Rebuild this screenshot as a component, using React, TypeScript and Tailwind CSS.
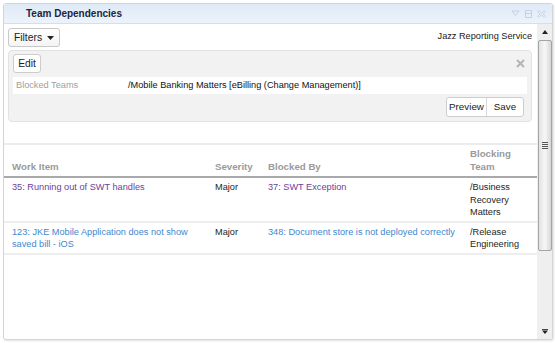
import React from "react";

function TitleIcons() {
  return (
    <svg width="36" height="10" viewBox="0 0 36 10" className="mr-[5px]">
      <polygon points="1,2 8,2 4.5,6.5" fill="none" stroke="#c4d2e2" strokeWidth="1" />
      <rect x="14.5" y="1.5" width="6" height="7" fill="none" stroke="#c4d2e2" strokeWidth="1" />
      <line x1="14.5" y1="4.5" x2="20.5" y2="4.5" stroke="#c4d2e2" strokeWidth="1" />
      <path d="M27.5 1.5 L30.5 4 L33.5 1.5 L34.5 2.5 L32 5 L34.5 7.5 L33.5 8.5 L30.5 6 L27.5 8.5 L26.5 7.5 L29 5 L26.5 2.5 Z" fill="none" stroke="#c4d2e2" strokeWidth="0.9" />
    </svg>
  );
}

function Scrollbar() {
  return (
    <div className="w-[15px] bg-[#efefef] flex flex-col items-center">
      <div className="h-[16px] w-full flex items-center justify-center">
        <svg width="6" height="4" viewBox="0 0 6 4">
          <polygon points="0,4 6,4 3,0" fill="#222" />
        </svg>
      </div>
      <div className="w-[14px] h-[211px] rounded-[2px] border border-[#a4a4a4] bg-gradient-to-r from-[#e2e2e2] via-[#f7f7f7] to-[#d6d6d6] flex items-center justify-center">
        <div className="flex flex-col gap-[1px]">
          <div className="w-[6px] h-[1px] bg-[#555]" />
          <div className="w-[6px] h-[1px] bg-[#555]" />
          <div className="w-[6px] h-[1px] bg-[#555]" />
          <div className="w-[6px] h-[1px] bg-[#555]" />
        </div>
      </div>
      <div className="flex-1" />
      <div className="h-[16px] w-full flex items-center justify-center">
        <svg width="6" height="5" viewBox="0 0 6 5">
          <rect x="0" y="0" width="6" height="1" fill="#444" />
          <polygon points="0,1.5 6,1.5 3,5" fill="#222" />
        </svg>
      </div>
    </div>
  );
}

const purple = "text-[#6e3e9c]";
const blue = "text-[#4188cf]";

export default function App() {
  return (
    <div className="w-[555px] h-[343px] bg-white pt-[3px] pl-[3px] pr-[2px] pb-[3px] font-['Liberation_Sans',Arial,sans-serif] text-[9.2px] text-[#1e1e1e]">
      <div className="h-full flex flex-col border border-[#d4d4d4] rounded-[3px] shadow-[1px_1px_2px_rgba(0,0,0,0.12)] overflow-hidden bg-white">
        <div className="h-[20px] shrink-0 flex items-center justify-between pl-[22px] border-b border-[#d3dfeb] bg-gradient-to-b from-[#dfeaf7] to-[#ecf3fb]">
          <span className="font-bold text-[10px] text-[#1c2540]">Team Dependencies</span>
          <TitleIcons />
        </div>
        <div className="flex flex-1 min-h-0">
          <div className="flex-1 min-w-0 flex flex-col">
            <div className="pt-[4px] pl-[4px] pr-[5px]">
              <div className="flex items-start justify-between">
                <button className="h-[19px] w-[52px] flex items-center pl-[5px] gap-[5px] border border-[#c9c9c9] rounded-[3px] bg-gradient-to-b from-white to-[#f4f4f4] text-[10.3px] text-[#222]">
                  <span>Filters</span>
                  <svg width="7" height="4" viewBox="0 0 7 4">
                    <polygon points="0,0 7,0 3.5,4" fill="#222" />
                  </svg>
                </button>
                <span className="pt-[2px] text-[#222]">Jazz Reporting Service</span>
              </div>
              <div className="mt-[3px] border border-[#e2e2e2] rounded-[4px] bg-[#f2f2f2] pt-[3px] pl-[4px] pr-[4px] pb-[4px]">
                <div className="flex items-start justify-between">
                  <button className="h-[19px] w-[28px] flex items-center justify-center border border-[#cccccc] rounded-[3px] bg-white text-[10.3px] text-[#222]">
                    Edit
                  </button>
                  <svg width="9" height="9" viewBox="0 0 9 9" className="mt-[5px] mr-[2px]">
                    <path d="M1 1 L8 8 M8 1 L1 8" stroke="#b4b4b4" strokeWidth="2" />
                  </svg>
                </div>
                <div className="mt-[4px] h-[17px] bg-white flex items-center">
                  <span className="w-[115px] pl-[3px] text-[#a0a0a0]">Blocked Teams</span>
                  <span className="text-[#111]">/Mobile Banking Matters [eBilling (Change Management)]</span>
                </div>
                <div className="mt-[3px] flex justify-end pr-[3px]">
                  <div className="flex h-[20px] border border-[#cdcdcd] rounded-[3px] bg-white text-[9.8px] text-[#222]">
                    <span className="w-[40px] flex items-center justify-center border-r border-[#d6d6d6]">Preview</span>
                    <span className="w-[36px] flex items-center justify-center">Save</span>
                  </div>
                </div>
              </div>
            </div>
            <table className="mt-[21px] w-full table-fixed border-collapse leading-[12.5px]">
              <colgroup>
                <col className="w-[207px]" />
                <col className="w-[53px]" />
                <col className="w-[202px]" />
                <col />
              </colgroup>
              <thead>
                <tr className="border-t-2 border-t-[#ececec] border-b-2 border-b-[#a9a9a9] text-[9.7px] font-bold text-[#9a9a9a]">
                  <th className="text-left align-bottom font-bold pl-[8px] pt-[3px] pb-[3px]">Work Item</th>
                  <th className="text-left align-bottom font-bold pl-[4px] pt-[3px] pb-[3px]">Severity</th>
                  <th className="text-left align-bottom font-bold pl-[4px] pt-[3px] pb-[3px]">Blocked By</th>
                  <th className="text-left align-bottom font-bold pl-[4px] pr-[4px] pt-[3px] pb-[3px]">Blocking Team</th>
                </tr>
              </thead>
              <tbody>
                <tr className="border-b-2 border-b-[#eeeeee]">
                  <td className={`align-top pl-[8px] pr-[4px] pt-[3px] pb-[2px] ${purple}`}>35: Running out of SWT handles</td>
                  <td className="align-top pl-[4px] pt-[3px] pb-[2px]">Major</td>
                  <td className={`align-top pl-[4px] pr-[2px] pt-[3px] pb-[2px] ${purple}`}>37: SWT Exception</td>
                  <td className="align-top pl-[4px] pr-[4px] pt-[3px] pb-[2px]">/Business Recovery Matters</td>
                </tr>
                <tr className="border-b-2 border-b-[#eeeeee]">
                  <td className={`align-top pl-[8px] pr-[4px] pt-[3px] pb-[2px] ${blue}`}>123: JKE Mobile Application does not show saved bill - iOS</td>
                  <td className="align-top pl-[4px] pt-[3px] pb-[2px]">Major</td>
                  <td className={`align-top pl-[4px] pr-[2px] pt-[3px] pb-[2px] ${blue}`}>348: Document store is not deployed correctly</td>
                  <td className="align-top pl-[4px] pr-[4px] pt-[3px] pb-[2px]">/Release Engineering</td>
                </tr>
              </tbody>
            </table>
          </div>
          <Scrollbar />
        </div>
      </div>
    </div>
  );
}
